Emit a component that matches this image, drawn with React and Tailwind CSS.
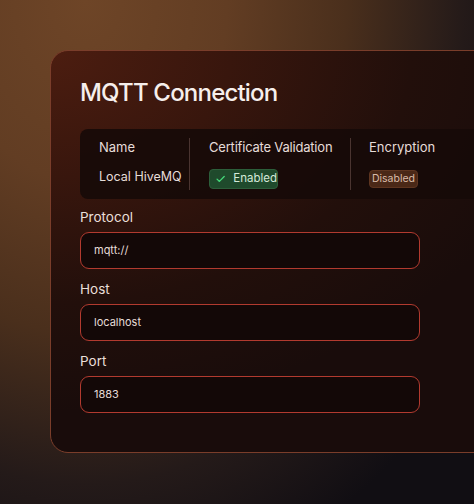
import React from "react";

function Field({ label, value }) {
  return (
    <div className="flex flex-col">
      <div className="text-[13.5px] leading-[20px] text-[#eadfd9]">{label}</div>
      <div className="mt-[5px] w-[340px] h-[37px] rounded-[9px] border-[1.5px] border-[#b23a2f] bg-[#130807] flex items-center pl-[13px] text-[11px] text-[#e6dcd8]">
        {value}
      </div>
    </div>
  );
}

export default function App() {
  return (
    <div
      className="w-[474px] h-[504px] overflow-hidden bg-[radial-gradient(ellipse_100%_120%_at_18%_0%,#6e4527_0%,#623d23_30%,#4a2f1c_55%,#241a19_80%,#110e13_100%)] pt-[50px] pl-[50px]"
      style={{ fontFamily: "Inter, 'Noto Sans', sans-serif" }}
    >
      <div className="w-[470px] h-[403px] rounded-[18px] border border-[#7a3d2a] bg-[radial-gradient(ellipse_110%_90%_at_0%_0%,#4c1d10_0%,#38160d_35%,#220f0b_70%,#190c0b_100%)] pl-[29px] pt-[26px]">
        <h1 className="text-[24px] leading-[32px] font-medium text-[#f6efec] tracking-[-0.8px]">
          MQTT Connection
        </h1>
        <div className="mt-[20px] w-[420px] h-[70px] rounded-[8px] bg-[#160a08]/90 flex pl-[19px]">
          <div className="w-[90px] flex flex-col pt-[8px]">
            <div className="h-[20px] leading-[20px] text-[13px] text-[#e6dcd8]">Name</div>
            <div className="mt-[10px] h-[20px] leading-[20px] text-[12.5px] text-[#e6dcd8]">Local HiveMQ</div>
          </div>
          <div className="w-px bg-[#4a3430] mt-[9px] h-[52px]" />
          <div className="w-[160px] flex flex-col pt-[8px] pl-[19px]">
            <div className="h-[20px] leading-[20px] text-[13px] text-[#e6dcd8] whitespace-nowrap tracking-[-0.2px]">Certificate Validation</div>
            <div className="mt-[12px] h-[20px] w-[69px] rounded-[4px] bg-[#1f4a2c] border border-[#2c5e3a] flex items-center pl-[6px] gap-[8px] text-[11.5px] text-[#d4e9d8]">
              <svg width="13" height="10" viewBox="0 0 13 10" fill="none">
                <path d="M1.5 5.2 L4.8 8.4 L11.5 1.5" stroke="#45d97a" strokeWidth="1.8" strokeLinecap="round" strokeLinejoin="round" />
              </svg>
              <span>Enabled</span>
            </div>
          </div>
          <div className="w-px bg-[#4a3430] mt-[9px] h-[52px]" />
          <div className="flex flex-col pt-[8px] pl-[18px]">
            <div className="h-[20px] leading-[20px] text-[13px] text-[#e6dcd8]">Encryption</div>
            <div className="mt-[13px] h-[18px] w-[49px] rounded-[4px] bg-[#4a2817] border border-[#5e3520] flex items-center justify-center text-[10.5px] text-[#d9bcaa]">
              Disabled
            </div>
          </div>
        </div>
        <div className="mt-[8px] flex flex-col gap-[10px]">
          <Field label="Protocol" value="mqtt://" />
          <Field label="Host" value="localhost" />
          <Field label="Port" value="1883" />
        </div>
      </div>
    </div>
  );
}
